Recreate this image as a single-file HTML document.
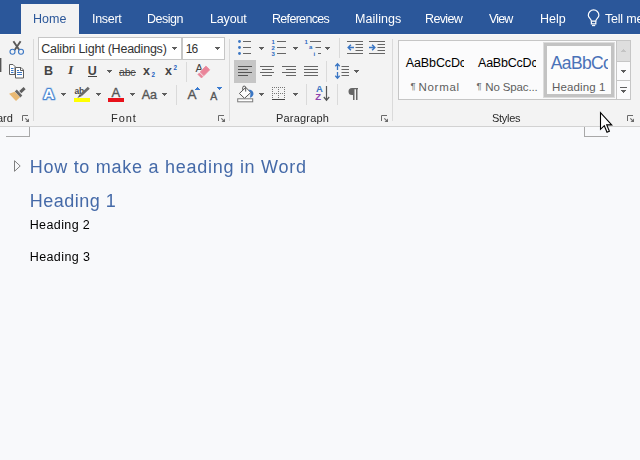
<!DOCTYPE html>
<html><head><meta charset="utf-8">
<style>
html,body{margin:0;padding:0;}
body{width:640px;height:460px;overflow:hidden;position:relative;background:#f8f9fb;font-family:"Liberation Sans",sans-serif;font-size:12px;color:#444;}
.abs{position:absolute;}
.t{position:absolute;white-space:nowrap;line-height:1;}
.tab,.lbl,.g{will-change:transform;}
#tabbar{left:0;top:0;width:640px;height:34px;background:#2b579a;}
#hometab{left:21px;top:4px;width:58px;height:31px;background:#f3f3f3;z-index:1;}
#t_home{z-index:2;}
.tab{color:#fff;font-size:12.5px;top:12px;}
#ribbon{left:0;top:34px;width:640px;height:92px;background:#f3f3f3;box-shadow:inset 0 1px 0 #f8f8f8;border-bottom:1px solid #d2d2d2;}
.vsep{position:absolute;width:1px;background:#dadada;}
.lbl{font-size:11px;color:#2a2a2a;top:113px;}
.box{position:absolute;background:#fff;border:1px solid #c6c6c6;box-sizing:border-box;}
svg{position:absolute;overflow:visible;}
.arr{position:absolute;width:5px;height:1px;background:#5e5e5e;}
.arr:before{content:"";position:absolute;left:1px;top:1px;width:3px;height:1px;background:#5e5e5e;}
.arr:after{content:"";position:absolute;left:2px;top:2px;width:1px;height:1px;background:#5e5e5e;}
.arr.bd,.arr.bd:before,.arr.bd:after{background:#3a7bd0;}
.arr.bu,.arr.bu:before,.arr.bu:after{background:#3a7bd0;}
.arr.bu:before{top:-1px;}.arr.bu:after{top:-2px;}
.arr.gu,.arr.gu:before,.arr.gu:after{background:#c4c4c4;}
#i_fc,#i_gA,#i_sA,#i_aa{-webkit-text-stroke:0.35px #555;}
/*FIT*/
#t_home{letter-spacing:0.00px;margin-left:0.00px;margin-top:1.00px}
#t_insert{letter-spacing:-0.30px;margin-left:-1.25px;margin-top:1.00px}
#t_design{letter-spacing:-0.50px;margin-left:-0.75px;margin-top:1.00px}
#t_layout{letter-spacing:-0.15px;margin-left:-0.50px;margin-top:1.00px}
#t_refs{letter-spacing:-0.69px;margin-left:-0.50px;margin-top:1.00px}
#t_mail{letter-spacing:0.07px;margin-left:-0.50px;margin-top:1.00px}
#t_review{letter-spacing:-0.65px;margin-left:-0.75px;margin-top:1.00px}
#t_view{letter-spacing:-0.83px;margin-left:-0.25px;margin-top:1.00px}
#t_help{letter-spacing:0.00px;margin-left:-0.50px;margin-top:1.00px}
#t_tell{letter-spacing:-0.21px;margin-left:-0.75px;margin-top:1.00px}
#r_font{letter-spacing:-0.22px;margin-left:-0.75px;margin-top:0.00px}
#r_size{letter-spacing:0.00px;margin-left:-0.25px;margin-top:0.00px}
#l_font{letter-spacing:0.92px;margin-left:-0.50px;margin-top:0.00px}
#l_para{letter-spacing:0.19px;margin-left:-0.50px;margin-top:0.00px}
#l_styles{letter-spacing:-0.30px;margin-left:-0.75px;margin-top:0.00px}
#s_aa1{letter-spacing:-0.11px;margin-left:0.75px;margin-top:1.00px}
#s_aa2{letter-spacing:-0.21px;margin-left:1.00px;margin-top:1.00px}
#s_n1{letter-spacing:0.70px;margin-left:-0.50px;margin-top:1.00px}
#s_n2{letter-spacing:-0.14px;margin-left:0.25px;margin-top:1.00px}
#s_aa3{letter-spacing:-0.66px;margin-left:0.80px;margin-top:2.00px}
#s_h1{letter-spacing:0.12px;margin-left:0.10px;margin-top:1.00px}
#d_h0{letter-spacing:0.73px;margin-left:-0.30px;margin-top:1.00px}
#d_h1{letter-spacing:0.49px;margin-left:-0.30px;margin-top:1.00px}
#d_h2{letter-spacing:0.39px;margin-left:-0.30px;margin-top:1.00px}
#d_h3{letter-spacing:0.41px;margin-left:-0.30px;margin-top:1.00px}
#i_b{letter-spacing:0.00px;margin-left:0.00px;margin-top:0.00px}
#i_i{letter-spacing:0.00px;margin-left:1.00px;margin-top:-2.00px}
#i_u{letter-spacing:0.00px;margin-left:-0.20px;margin-top:0.00px}
#i_aa{letter-spacing:0.00px;margin-left:-0.25px;margin-top:1.00px}
#i_gA{letter-spacing:0.00px;margin-left:0.50px;margin-top:0.00px}
#i_sA{letter-spacing:0.00px;margin-left:0.20px;margin-top:0.00px}
#i_fc{letter-spacing:0.00px;margin-left:0.50px;margin-top:0.00px}
#s_p1{letter-spacing:0.00px;margin-left:-0.60px;margin-top:-1.00px}
#s_p2{letter-spacing:0.00px;margin-left:-0.10px;margin-top:-1.00px}
#i_sa{letter-spacing:0.00px;margin-left:0.40px;margin-top:-1.00px}
#i_sz{letter-spacing:0.00px;margin-left:-0.70px;margin-top:-1.00px}
#i_ab{letter-spacing:0.00px;margin-left:0.90px;margin-top:0.50px}
/*ENDFIT*/
</style></head><body>
<div class="abs" id="tabbar"></div>
<div class="abs" id="hometab"></div>
<span class="t tab" id="t_home" style="left:33px;color:#2b579a;">Home</span>
<span class="t tab" id="t_insert" style="left:93px;">Insert</span>
<span class="t tab" id="t_design" style="left:148px;">Design</span>
<span class="t tab" id="t_layout" style="left:210px;">Layout</span>
<span class="t tab" id="t_refs" style="left:272px;">References</span>
<span class="t tab" id="t_mail" style="left:355px;">Mailings</span>
<span class="t tab" id="t_review" style="left:426px;">Review</span>
<span class="t tab" id="t_view" style="left:489px;">View</span>
<span class="t tab" id="t_help" style="left:540px;">Help</span>
<span class="t tab" id="t_tell" style="left:606px;">Tell me</span>
<svg style="left:0;top:0" width="640" height="40" viewBox="0 0 640 40"><path d="M591.400 21.200c0-2.500-3.100-3.300-3.100-6a5.300 5.300 0 0 1 10.600 0c0 2.700-3.100 3.500-3.100 6z" fill="none" stroke="#fff" stroke-width="1.200"/><path d="M591.400 21.200v2.600h4.400v-2.600" fill="none" stroke="#fff" stroke-width="1.200"/><path d="M592 25.600h3.200" stroke="#fff" stroke-width="1.100"/></svg>

<div class="abs" id="ribbon"></div>

<!-- clipboard group -->
<div class="abs" style="left:0;top:58px;width:1px;height:14px;background:#555;"></div>
<div class="abs" style="left:1px;top:58px;width:1px;height:14px;background:#b4b4b4;"></div>
<svg style="left:0;top:0" width="640" height="460" viewBox="0 0 640 460">
<!-- scissors -->
<path d="M13.400 41.200L19.300 50M20.600 41.200L14.700 50" stroke="#595959" stroke-width="1.900" fill="none"/>
<circle cx="12.500" cy="51.800" r="2.500" fill="none" stroke="#3a76c4" stroke-width="1.100"/>
<circle cx="21" cy="51.800" r="2.500" fill="none" stroke="#3a76c4" stroke-width="1.100"/>
<!-- copy -->
<path d="M9.500 64.500h3.500l2 2v8h-5.500z" fill="#fff" stroke="#5e5e5e" stroke-width="1"/>
<path d="M15.500 67.500h5.500l2.500 2.500v8h-8z" fill="#fff" stroke="#5e5e5e" stroke-width="1"/>
<path d="M20.500 67.500v3h3" fill="none" stroke="#5e5e5e" stroke-width="1"/>
<path d="M11 68.500h2.500M11 70.500h2.500M11 72.500h2.500M17 72.500h5M17 74.500h5M17 70.500h2" stroke="#3a76c4" stroke-width="1"/>
<!-- format painter -->
<path d="M20.300 92.200L24.600 88.200" stroke="#5e5e5e" stroke-width="3" fill="none"/>
<path d="M16.800 89.600l5.500 5.800-2 2-5.500-5.800z" fill="#666"/>
<path d="M9.100 93.800l5.600-2 5.300 5.500-4 3.600z" fill="#e9b973"/>
</svg>
<span class="t lbl" id="l_ard2" style="left:-3.500px;top:112.500px;">ard</span>
<svg style="left:22px;top:115px" width="8" height="8" viewBox="0 0 8 8"><path d="M0.500 6V0.500H6" fill="none" stroke="#6a6a6a" stroke-width="1"/><path d="M3.300 3.300l3 3" stroke="#6a6a6a" stroke-width="1.100"/><path d="M7 3.500V7H3.500z" fill="#6a6a6a"/></svg>
<div class="vsep" style="left:33px;top:39px;height:82px;"></div>

<!-- font group -->
<div class="box" style="left:38px;top:37px;width:144px;height:23px;"></div>
<div class="box" style="left:182px;top:37px;width:43px;height:23px;"></div>
<span class="t" id="r_font" style="left:42px;top:43px;font-size:12.5px;color:#333;">Calibri Light (Headings)</span>
<div class="arr" style="left:172px;top:47px;"></div>
<span class="t" id="r_size" style="left:186px;top:43px;font-size:12px;letter-spacing:-0.8px;color:#333;">16</span>
<div class="arr" style="left:215px;top:47px;"></div>

<span class="t" id="i_b" style="left:44px;top:65px;font-size:12.5px;font-weight:bold;color:#444;">B</span>
<span class="t" id="i_i" style="left:67px;top:65px;font-size:13.5px;font-style:italic;font-family:'Liberation Serif',serif;font-weight:bold;color:#444;">I</span>
<span class="t" id="i_u" style="left:88px;top:65px;font-size:12.5px;font-weight:bold;color:#444;">U</span>
<div class="abs" style="left:88px;top:76px;width:9px;height:1px;background:#444;"></div>
<div class="arr" style="left:107px;top:70px;"></div>
<span class="t" id="i_abc" style="left:119px;top:66.500px;font-size:10.500px;letter-spacing:-0.2px;color:#444;">abc</span>
<div class="abs" style="left:118.500px;top:72px;width:17px;height:1px;background:#444;"></div>
<span class="t" id="i_x1" style="left:143px;top:65px;font-size:12.5px;font-weight:bold;color:#444;">x</span>
<span class="t" id="i_21" style="left:151.500px;top:72px;font-size:6.300px;font-weight:bold;color:#1f5fc0;">2</span>
<span class="t" id="i_x2" style="left:165px;top:65px;font-size:12.5px;font-weight:bold;color:#444;">x</span>
<span class="t" id="i_22" style="left:173.500px;top:64.500px;font-size:6.300px;font-weight:bold;color:#1f5fc0;">2</span>
<div class="vsep" style="left:186px;top:62px;height:20px;"></div>
<svg style="left:194px;top:62px" width="18" height="18" viewBox="0 0 18 18"><text x="1.600" y="10" font-size="11" fill="#444" font-family="Liberation Sans,sans-serif">A</text><path d="M5.300 9.500L12 3.300 16.300 7.800 9.800 14.300z" fill="#f3f3f3"/><path d="M6.400 10L11.900 4.200 15.600 7.800 9.900 13.600z" fill="#ea8499" stroke="#ea8499" stroke-width="1" stroke-linejoin="round"/><path d="M5.400 10.900L9 14.500 7.500 16 3.900 12.400z" fill="#ea8499" stroke="#ea8499" stroke-width="0.600" stroke-linejoin="round"/></svg>

<svg style="left:41px;top:85px" width="16" height="17" viewBox="0 0 16 17"><text x="2.200" y="13.800" font-size="15.500" font-weight="bold" fill="#fff" stroke="#c3d6ee" stroke-width="3.600" stroke-linejoin="round" font-family="Liberation Sans,sans-serif">A</text><text x="2.200" y="13.800" font-size="15.500" font-weight="bold" fill="#fff" stroke="#4a86d0" stroke-width="2.200" stroke-linejoin="round" paint-order="stroke" font-family="Liberation Sans,sans-serif">A</text></svg>
<div class="arr" style="left:61px;top:93px;"></div>
<span class="t" id="i_ab" style="left:73.500px;top:86px;font-size:8.500px;font-weight:bold;color:#4a4a4a;">ab</span>
<svg style="left:73px;top:84px" width="18" height="20" viewBox="0 0 18 20"><path d="M8 11L15.800 3.700" stroke="#6a6a6a" stroke-width="2.800" fill="none"/><path d="M6.900 9.900l2.100 2.200-4.600 1.800z" fill="#5a5a5a"/><rect x="1" y="14" width="16" height="4" fill="#ffff00"/></svg>
<div class="arr" style="left:96px;top:93px;"></div>
<span class="t" id="i_fc" style="left:111px;top:86px;font-size:13px;color:#555;">A</span>
<div class="abs" style="left:108px;top:98px;width:16px;height:4px;background:#e8111a;"></div>
<div class="arr" style="left:130px;top:93px;"></div>
<span class="t" id="i_aa" style="left:142px;top:88px;font-size:12.500px;color:#555;">Aa</span>
<div class="arr" style="left:162px;top:93px;"></div>
<div class="vsep" style="left:176px;top:85px;height:20px;"></div>
<span class="t" id="i_gA" style="left:187px;top:88px;font-size:13.500px;color:#555;">A</span>
<div class="arr bu" style="left:195px;top:89px;"></div>
<span class="t" id="i_sA" style="left:210px;top:91px;font-size:10.500px;color:#555;">A</span>
<div class="arr bd" style="left:217px;top:87px;"></div>
<span class="t lbl" id="l_font" style="left:111px;">Font</span>
<svg style="left:218px;top:115px" width="8" height="8" viewBox="0 0 8 8"><path d="M0.500 6V0.500H6" fill="none" stroke="#6a6a6a" stroke-width="1"/><path d="M3.300 3.300l3 3" stroke="#6a6a6a" stroke-width="1.100"/><path d="M7 3.500V7H3.500z" fill="#6a6a6a"/></svg>
<div class="vsep" style="left:229px;top:39px;height:82px;"></div>

<!-- paragraph group -->
<svg style="left:238px;top:40px" width="14" height="15" viewBox="0 0 14 15"><g fill="#3a76c4"><circle cx="1.500" cy="1.500" r="1.400"/><circle cx="1.500" cy="7.500" r="1.400"/><circle cx="1.500" cy="13.500" r="1.400"/></g><path d="M5 1.500h8M5 7.500h8M5 13.500h8" stroke="#666" stroke-width="1"/></svg>
<div class="arr" style="left:259px;top:47px;"></div>
<svg style="left:271px;top:40px" width="15" height="16" viewBox="0 0 15 16"><path d="M6 1.500h9M6 7.500h9M6 13.500h9" stroke="#666" stroke-width="1"/><g font-size="6" font-weight="bold" fill="#2a68c0" font-family="Liberation Sans,sans-serif"><text x="0.500" y="3.500">1</text><text x="0.500" y="9.500">2</text><text x="0.500" y="15.500">3</text></g></svg>
<div class="arr" style="left:293px;top:47px;"></div>
<svg style="left:304px;top:40px" width="17" height="16" viewBox="0 0 17 16"><path d="M6 1.500h11M11.500 7.500h5.500M14 13.500h3" stroke="#666" stroke-width="1"/><g font-size="6" font-weight="bold" fill="#2a68c0" font-family="Liberation Sans,sans-serif"><text x="0.500" y="3.500">1</text><text x="5" y="9">a</text><text x="9.500" y="15.500">i</text></g></svg>
<div class="arr" style="left:325px;top:47px;"></div>
<div class="vsep" style="left:339px;top:38px;height:20px;"></div>
<svg style="left:347px;top:41px" width="16" height="13" viewBox="0 0 16 13"><path d="M0 0.500h16M8.500 3.500h7.500M8.500 6.500h7.500M8.500 9.500h7.500M0 12.500h16" stroke="#666" stroke-width="1"/><path d="M7 6.500H1.200M3.900 3.800L1.200 6.500 3.900 9.200" stroke="#3a76c4" stroke-width="1.500" fill="none"/></svg>
<svg style="left:369px;top:41px" width="16" height="13" viewBox="0 0 16 13"><path d="M0 0.500h16M8.500 3.500h7.500M8.500 6.500h7.500M8.500 9.500h7.500M0 12.500h16" stroke="#666" stroke-width="1"/><path d="M0 6.500H5.800M3.100 3.800L5.800 6.500 3.100 9.200" stroke="#3a76c4" stroke-width="1.500" fill="none"/></svg>

<div class="abs" style="left:234px;top:60px;width:22px;height:23px;background:#c6c6c6;"></div>
<svg style="left:238px;top:66px" width="14" height="10" viewBox="0 0 14 10"><path d="M0 0.500h14M0 3.500h10M0 6.500h14M0 9.500h10" stroke="#555" stroke-width="1"/></svg>
<svg style="left:260px;top:66px" width="14" height="10" viewBox="0 0 14 10"><path d="M0 0.500h14M2 3.500h10M0 6.500h14M2 9.500h10" stroke="#666" stroke-width="1"/></svg>
<svg style="left:282px;top:66px" width="14" height="10" viewBox="0 0 14 10"><path d="M0 0.500h14M4 3.500h10M0 6.500h14M4 9.500h10" stroke="#666" stroke-width="1"/></svg>
<svg style="left:304px;top:66px" width="14" height="10" viewBox="0 0 14 10"><path d="M0 0.500h14M0 3.500h14M0 6.500h14M0 9.500h14" stroke="#666" stroke-width="1"/></svg>
<div class="vsep" style="left:326px;top:61px;height:21px;"></div>
<svg style="left:334px;top:63px" width="15" height="16" viewBox="0 0 15 16"><path d="M7.500 3.500h7.500M7.500 6.500h7.500M7.500 9.500h7.500M7.500 12.500h7.500" stroke="#666" stroke-width="1"/><path d="M3.500 0.800v6.200M3.500 9v6.200M1.300 3.200l2.200-2.400 2.200 2.400M1.300 12.800l2.200 2.400 2.200-2.400" stroke="#3a76c4" stroke-width="1.300" fill="none"/></svg>
<div class="arr" style="left:354px;top:70px;"></div>

<svg style="left:237px;top:85px" width="17" height="17" viewBox="0 0 17 17"><path d="M2.400 8.500L8.800 2.400 13.800 7.500 7.500 13.300z" fill="#fdfdfd" stroke="#555" stroke-width="1"/><path d="M5.700 4.800V2.600a1.500 1.500 0 0 1 3 0V6.600" fill="none" stroke="#555" stroke-width="1"/><path d="M11.800 4.900C14.800 4.600 17 7 16.400 9.500 16 11 14.800 12.300 13 12.700 13.300 11 13.300 9.500 13.600 7.500z" fill="#3a76c4"/><rect x="0.700" y="13.800" width="15" height="3" fill="#fff" stroke="#7a7a7a"/></svg>
<div class="arr" style="left:259px;top:93px;"></div>
<svg style="left:272px;top:87px" width="14" height="13" viewBox="0 0 14 13"><path d="M0.500 0v12M6.500 0v12M12.500 0v12M0 0.500h13M0 6.500h13" fill="none" stroke="#777" stroke-width="1" stroke-dasharray="1 1"/><path d="M0 12.500h13" stroke="#444" stroke-width="1"/></svg>
<div class="arr" style="left:293px;top:93px;"></div>
<div class="vsep" style="left:306px;top:84px;height:21px;"></div>
<span class="t" id="i_sa" style="left:315.500px;top:85px;font-size:9.500px;color:#3a76c4;font-weight:bold;">A</span>
<span class="t" id="i_sz" style="left:316px;top:93px;font-size:9.500px;color:#8e44ad;font-weight:bold;">Z</span>
<svg style="left:323px;top:86px" width="7" height="15" viewBox="0 0 7 15"><path d="M3.500 0v14M0.800 11l2.700 3.200 2.700-3.200" stroke="#555" stroke-width="1.200" fill="none"/></svg>
<div class="vsep" style="left:337px;top:84px;height:21px;"></div>
<svg style="left:348px;top:88px" width="10" height="12" viewBox="0 0 10 12"><path d="M10 0H4a3.500 3.500 0 0 0 0 7h1v5h1.500V1.300H8V12h1.500V1.300H10z" fill="#666"/></svg>
<span class="t lbl" id="l_para" style="left:276px;">Paragraph</span>
<svg style="left:381px;top:115px" width="8" height="8" viewBox="0 0 8 8"><path d="M0.500 6V0.500H6" fill="none" stroke="#6a6a6a" stroke-width="1"/><path d="M3.300 3.300l3 3" stroke="#6a6a6a" stroke-width="1.100"/><path d="M7 3.500V7H3.500z" fill="#6a6a6a"/></svg>
<div class="vsep" style="left:392px;top:39px;height:82px;"></div>

<!-- styles -->
<div class="box" style="left:398px;top:40px;width:233px;height:60px;background:#fbfbfc;"></div>
<div class="abs" style="left:616px;top:41px;width:1px;height:58px;background:#c6c6c6;"></div>
<div class="abs" style="left:617px;top:41px;width:13px;height:20px;background:#dedede;"></div>
<div class="abs" style="left:617px;top:61px;width:13px;height:1px;background:#c6c6c6;"></div>
<div class="abs" style="left:617px;top:80px;width:13px;height:1px;background:#c6c6c6;"></div>
<div class="arr bu gu" style="left:621px;top:51px;"></div>
<div class="arr" style="left:621px;top:70px;"></div>
<div class="abs" style="left:620px;top:87px;width:7px;height:1px;background:#606060;"></div>
<div class="arr" style="left:621px;top:90px;"></div>
<div class="abs" style="left:400px;top:50px;width:64px;height:24px;overflow:hidden;"><span class="t" id="s_aa1" style="left:5px;top:6px;font-size:12.500px;color:#000;">AaBbCcDc</span></div>
<span class="t" id="s_p1" style="left:411px;top:82px;font-size:9.500px;color:#6a6a6a;">¶</span>
<span class="t" id="s_n1" style="left:419px;top:81px;font-size:11.500px;color:#5e5e5e;">Normal</span>
<div class="abs" style="left:470px;top:50px;width:66px;height:24px;overflow:hidden;"><span class="t" id="s_aa2" style="left:7px;top:6px;font-size:12.500px;color:#000;">AaBbCcDc</span></div>
<span class="t" id="s_p2" style="left:476.500px;top:82px;font-size:9.500px;color:#6a6a6a;">¶</span>
<span class="t" id="s_n2" style="left:485px;top:81px;font-size:11.500px;color:#5e5e5e;">No Spac...</span>
<div class="abs" style="left:543px;top:42px;width:72px;height:56px;box-sizing:border-box;border:1px solid #dcdcdc;background:#fff;"></div>
<div class="abs" style="left:544px;top:43px;width:70px;height:54px;box-sizing:border-box;border:3px solid #c3c3c3;background:#fcfcfc;"></div>
<div class="abs" style="left:547px;top:46px;width:61px;height:30px;overflow:hidden;"><span class="t" id="s_aa3" style="left:3px;top:7px;font-size:17.500px;color:#4a72b8;">AaBbCc</span></div>
<span class="t" id="s_h1" style="left:552px;top:81px;font-size:11.500px;color:#5e5e5e;">Heading 1</span>
<span class="t lbl" id="l_styles" style="left:493px;">Styles</span>
<svg style="left:627px;top:115px" width="8" height="8" viewBox="0 0 8 8"><path d="M0.500 6V0.500H6" fill="none" stroke="#6a6a6a" stroke-width="1"/><path d="M3.300 3.300l3 3" stroke="#6a6a6a" stroke-width="1.100"/><path d="M7 3.500V7H3.500z" fill="#6a6a6a"/></svg>

<!-- document -->
<div class="abs" style="left:29px;top:127px;width:1px;height:10px;background:#a8a8a8;"></div>
<div class="abs" style="left:6px;top:136px;width:24px;height:1px;background:#a8a8a8;"></div>
<div class="abs" style="left:584px;top:127px;width:1px;height:10px;background:#a8a8a8;"></div>
<div class="abs" style="left:584px;top:136px;width:24px;height:1px;background:#a8a8a8;"></div>
<svg style="left:14px;top:160px" width="7" height="12" viewBox="0 0 7 12"><path d="M0.500 0.700L6.200 6 0.500 11.300z" fill="none" stroke="#808080" stroke-width="1"/></svg>
<span class="t" id="d_h0" style="left:30px;top:157px;font-size:18px;color:#456aa8;">How to make a heading in Word</span>
<span class="t" id="d_h1" style="left:30px;top:191px;font-size:18px;color:#456aa8;">Heading 1</span>
<span class="t" id="d_h2" style="left:30px;top:218px;font-size:12.500px;color:#000;">Heading 2</span>
<span class="t" id="d_h3" style="left:30px;top:250px;font-size:12.500px;color:#000;">Heading 3</span>

<!-- cursor -->
<svg style="left:600px;top:112px" width="13" height="21" viewBox="0 0 13 21"><path d="M0.500 0.700v16.600l3.800-3.600 2.700 6.500 2.400-1-2.700-6.300h5z" fill="#fff" stroke="#000" stroke-width="1.100"/></svg>
</body></html>
